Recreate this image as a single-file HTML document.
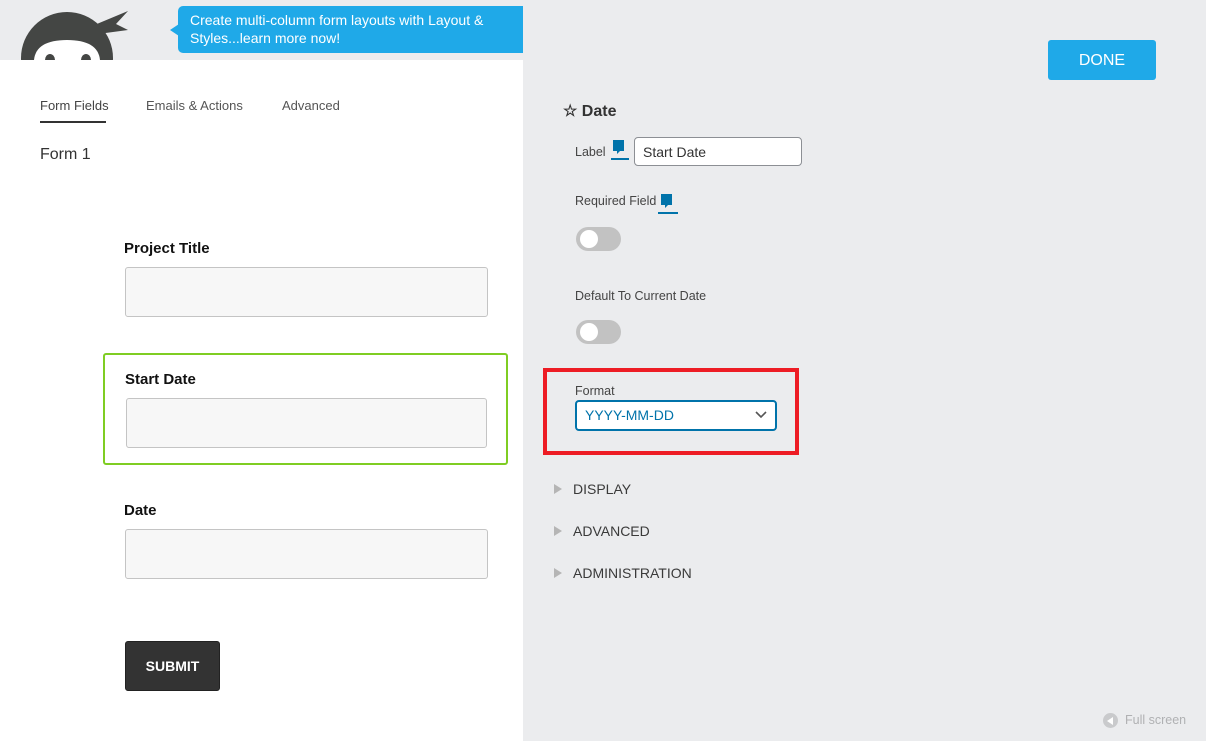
<!DOCTYPE html>
<html><head><style>
*{box-sizing:border-box;margin:0;padding:0}
body{width:1206px;height:741px;background:#ebecee;font-family:"Liberation Sans",sans-serif;position:relative;overflow:hidden;color:#333}
.a{position:absolute}
.panel{left:0;top:60px;width:523px;height:681px;background:#fff}
.inp{background:#f7f7f7;border:1px solid #c4c4c4;border-radius:3px;height:50px;width:363px}
.lbl{font-weight:bold;font-size:15px;color:#111}
.tog{width:45px;height:24px;border-radius:12px;background:#c2c2c2}
.tog:after{content:"";position:absolute;left:4px;top:3px;width:18px;height:18px;border-radius:50%;background:#fff}
.sec{font-size:14px;color:#3a3a3a;left:573px}
.tri{left:554px;width:0;height:0;border-left:8px solid #b5b5b5;border-top:5px solid transparent;border-bottom:5px solid transparent}
</style></head><body>
<svg class="a" style="left:0;top:0" width="140" height="60" viewBox="0 0 140 60">
<circle cx="67" cy="58" r="46" fill="#444644"/>
<path d="M92 26 L128 11 L116 24 L128 30 L98 34Z" fill="#444644"/>
<path d="M34 60 Q36 40 67 40 Q98 40 100 60Z" fill="#fff"/>
<ellipse cx="50" cy="60" rx="5" ry="6" fill="#444644"/>
<ellipse cx="86" cy="60" rx="5" ry="6" fill="#444644"/>
</svg>
<div class="a panel"></div>
<div class="a" style="left:178px;top:6px;width:345px;height:47px;background:#1fa9e8;border-radius:5px 0 0 5px;color:#fff;font-size:14px;line-height:18px;padding:5px 0 0 12px">Create multi-column form layouts with Layout &amp;<br>Styles...learn more now!</div>
<div class="a" style="left:170px;top:24px;border-right:9px solid #1fa9e8;border-top:6px solid transparent;border-bottom:6px solid transparent"></div>
<div class="a" style="left:40px;top:98px;font-size:13px;color:#444">Form Fields</div>
<div class="a" style="left:40px;top:121px;width:66px;height:2px;background:#333"></div>
<div class="a" style="left:146px;top:98px;font-size:13px;color:#555">Emails &amp; Actions</div>
<div class="a" style="left:282px;top:98px;font-size:13px;color:#555">Advanced</div>
<div class="a" style="left:40px;top:146px;font-size:16px;color:#333">Form 1</div>
<div class="a lbl" style="left:124px;top:240px">Project Title</div>
<div class="a inp" style="left:125px;top:267px"></div>
<div class="a" style="left:103px;top:353px;width:405px;height:112px;border:2px solid #7fcd23;border-radius:3px"></div>
<div class="a lbl" style="left:125px;top:371px">Start Date</div>
<div class="a inp" style="left:126px;top:398px;width:361px"></div>
<div class="a lbl" style="left:124px;top:502px">Date</div>
<div class="a inp" style="left:125px;top:529px"></div>
<div class="a" style="left:125px;top:641px;width:95px;height:50px;background:#333;border:1px solid #222;border-radius:3px;color:#fff;font-weight:bold;font-size:14px;text-align:center;line-height:48px">SUBMIT</div>
<div class="a" style="left:1048px;top:40px;width:108px;height:40px;background:#1fa9e8;border-radius:3px;color:#fff;font-size:16px;text-align:center;line-height:42px">DONE</div>
<div class="a" style="left:563px;top:101px;font-size:16px;font-weight:bold;color:#333">☆ Date</div>
<div class="a" style="left:575px;top:145px;font-size:12.5px;color:#444">Label</div>
<svg class="a" style="left:610px;top:139px" width="19" height="22"><path d="M3 1h11v11h-4l-3 3v-3h-4z" fill="#0073aa"/><rect x="1" y="19" width="18" height="2" fill="#0073aa"/></svg>
<div class="a" style="left:634px;top:137px;width:168px;height:29px;background:#fff;border:1px solid #8c8f94;border-radius:4px;font-size:14px;padding:6px 8px;color:#333">Start Date</div>
<div class="a" style="left:575px;top:194px;font-size:12.5px;color:#444">Required Field</div>
<svg class="a" style="left:657px;top:193px" width="21" height="22"><path d="M4 1h11v11h-4l-3 3v-3h-4z" fill="#0073aa"/><rect x="1" y="19" width="20" height="2" fill="#0073aa"/></svg>
<div class="a tog" style="left:576px;top:227px"></div>
<div class="a" style="left:575px;top:289px;font-size:12.5px;color:#444">Default To Current Date</div>
<div class="a tog" style="left:576px;top:320px"></div>
<div class="a" style="left:543px;top:368px;width:256px;height:87px;border:4px solid #ed1c24"></div>
<div class="a" style="left:575px;top:384px;font-size:12.5px;color:#444">Format</div>
<div class="a" style="left:575px;top:400px;width:202px;height:31px;background:#fff;border:2px solid #0073aa;border-radius:4px;font-size:14px;color:#0073aa;padding:5px 8px">YYYY-MM-DD</div>
<svg class="a" style="left:755px;top:410px" width="12" height="10"><path d="M1 2l5 5 5-5" stroke="#555" stroke-width="1.6" fill="none"/></svg>
<div class="a tri" style="top:484px"></div><div class="a sec" style="top:481px">DISPLAY</div>
<div class="a tri" style="top:526px"></div><div class="a sec" style="top:523px">ADVANCED</div>
<div class="a tri" style="top:568px"></div><div class="a sec" style="top:565px">ADMINISTRATION</div>
<div class="a" style="left:1103px;top:713px;width:15px;height:15px;border-radius:50%;background:#c9cacc"></div>
<div class="a" style="left:1107px;top:717px;border-right:6px solid #fff;border-top:4px solid transparent;border-bottom:4px solid transparent"></div>
<div class="a" style="left:1125px;top:713px;font-size:12.5px;color:#b0b1b3">Full screen</div>
</body></html>
